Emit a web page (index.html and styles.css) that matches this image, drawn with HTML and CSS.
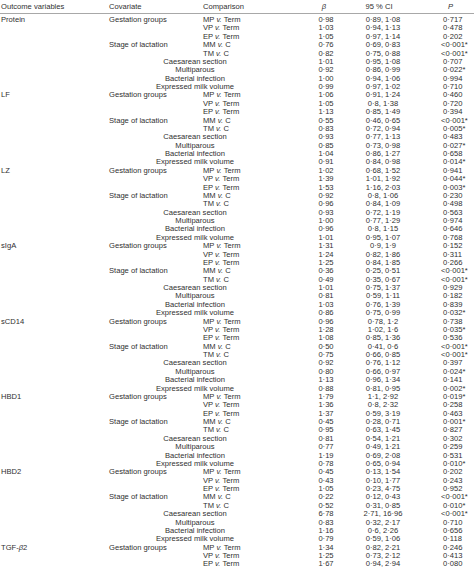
FILE: index.html
```html
<!DOCTYPE html>
<html>
<head>
<meta charset="utf-8">
<link rel="stylesheet" href="styles.css">
</head>
<body>
<table class="tbl">
<colgroup>
<col class="c-out"><col class="c-cov"><col class="c-cmp"><col class="c-b"><col class="c-ci"><col class="c-p">
</colgroup>
<thead>
<tr><th class="out">Outcome variables</th><th class="cov">Covariate</th><th class="cmp">Comparison</th><th class="ctr hb"><i>β</i></th><th class="ctr hci">95 % CI</th><th class="hp"><i>P</i></th></tr>
</thead>
<tbody>
<tr class="first"><td class="out">Protein</td><td class="cov">Gestation groups</td><td class="cmp">MP <i>v.</i> Term</td><td class="ctr">0·98</td><td class="ctr">0·89, 1·08</td><td class="p">0·717</td></tr>
<tr><td></td><td></td><td class="cmp">VP <i>v.</i> Term</td><td class="ctr">1·03</td><td class="ctr">0·94, 1·13</td><td class="p">0·478</td></tr>
<tr><td></td><td></td><td class="cmp">EP <i>v.</i> Term</td><td class="ctr">1·05</td><td class="ctr">0·97, 1·14</td><td class="p">0·202</td></tr>
<tr><td></td><td class="cov">Stage of lactation</td><td class="cmp">MM <i>v.</i> C</td><td class="ctr">0·76</td><td class="ctr">0·69, 0·83</td><td class="p lt">&lt;0·001*</td></tr>
<tr><td></td><td></td><td class="cmp">TM <i>v.</i> C</td><td class="ctr">0·82</td><td class="ctr">0·75, 0·88</td><td class="p lt">&lt;0·001*</td></tr>
<tr><td></td><td class="span" colspan="2">Caesarean section</td><td class="ctr">1·01</td><td class="ctr">0·95, 1·08</td><td class="p">0·707</td></tr>
<tr><td></td><td class="span" colspan="2">Multiparous</td><td class="ctr">0·92</td><td class="ctr">0·86, 0·99</td><td class="p">0·022*</td></tr>
<tr><td></td><td class="span" colspan="2">Bacterial infection</td><td class="ctr">1·00</td><td class="ctr">0·94, 1·06</td><td class="p">0·994</td></tr>
<tr><td></td><td class="span" colspan="2">Expressed milk volume</td><td class="ctr">0·99</td><td class="ctr">0·97, 1·02</td><td class="p">0·710</td></tr>

<tr><td class="out">LF</td><td class="cov">Gestation groups</td><td class="cmp">MP <i>v.</i> Term</td><td class="ctr">1·06</td><td class="ctr">0·91, 1·24</td><td class="p">0·460</td></tr>
<tr><td></td><td></td><td class="cmp">VP <i>v.</i> Term</td><td class="ctr">1·05</td><td class="ctr">0·8, 1·38</td><td class="p">0·720</td></tr>
<tr><td></td><td></td><td class="cmp">EP <i>v.</i> Term</td><td class="ctr">1·13</td><td class="ctr">0·85, 1·49</td><td class="p">0·394</td></tr>
<tr><td></td><td class="cov">Stage of lactation</td><td class="cmp">MM <i>v.</i> C</td><td class="ctr">0·55</td><td class="ctr">0·46, 0·65</td><td class="p lt">&lt;0·001*</td></tr>
<tr><td></td><td></td><td class="cmp">TM <i>v.</i> C</td><td class="ctr">0·83</td><td class="ctr">0·72, 0·94</td><td class="p">0·005*</td></tr>
<tr><td></td><td class="span" colspan="2">Caesarean section</td><td class="ctr">0·93</td><td class="ctr">0·77, 1·13</td><td class="p">0·483</td></tr>
<tr><td></td><td class="span" colspan="2">Multiparous</td><td class="ctr">0·85</td><td class="ctr">0·73, 0·98</td><td class="p">0·027*</td></tr>
<tr><td></td><td class="span" colspan="2">Bacterial infection</td><td class="ctr">1·04</td><td class="ctr">0·86, 1·27</td><td class="p">0·658</td></tr>
<tr><td></td><td class="span" colspan="2">Expressed milk volume</td><td class="ctr">0·91</td><td class="ctr">0·84, 0·98</td><td class="p">0·014*</td></tr>

<tr><td class="out">LZ</td><td class="cov">Gestation groups</td><td class="cmp">MP <i>v.</i> Term</td><td class="ctr">1·02</td><td class="ctr">0·68, 1·52</td><td class="p">0·941</td></tr>
<tr><td></td><td></td><td class="cmp">VP <i>v.</i> Term</td><td class="ctr">1·39</td><td class="ctr">1·01, 1·92</td><td class="p">0·044*</td></tr>
<tr><td></td><td></td><td class="cmp">EP <i>v.</i> Term</td><td class="ctr">1·53</td><td class="ctr">1·16, 2·03</td><td class="p">0·003*</td></tr>
<tr><td></td><td class="cov">Stage of lactation</td><td class="cmp">MM <i>v.</i> C</td><td class="ctr">0·92</td><td class="ctr">0·8, 1·06</td><td class="p">0·230</td></tr>
<tr><td></td><td></td><td class="cmp">TM <i>v.</i> C</td><td class="ctr">0·96</td><td class="ctr">0·84, 1·09</td><td class="p">0·498</td></tr>
<tr><td></td><td class="span" colspan="2">Caesarean section</td><td class="ctr">0·93</td><td class="ctr">0·72, 1·19</td><td class="p">0·563</td></tr>
<tr><td></td><td class="span" colspan="2">Multiparous</td><td class="ctr">1·00</td><td class="ctr">0·77, 1·29</td><td class="p">0·974</td></tr>
<tr><td></td><td class="span" colspan="2">Bacterial infection</td><td class="ctr">0·96</td><td class="ctr">0·8, 1·15</td><td class="p">0·646</td></tr>
<tr><td></td><td class="span" colspan="2">Expressed milk volume</td><td class="ctr">1·01</td><td class="ctr">0·95, 1·07</td><td class="p">0·768</td></tr>

<tr><td class="out">sIgA</td><td class="cov">Gestation groups</td><td class="cmp">MP <i>v.</i> Term</td><td class="ctr">1·31</td><td class="ctr">0·9, 1·9</td><td class="p">0·152</td></tr>
<tr><td></td><td></td><td class="cmp">VP <i>v.</i> Term</td><td class="ctr">1·24</td><td class="ctr">0·82, 1·86</td><td class="p">0·311</td></tr>
<tr><td></td><td></td><td class="cmp">EP <i>v.</i> Term</td><td class="ctr">1·25</td><td class="ctr">0·84, 1·85</td><td class="p">0·266</td></tr>
<tr><td></td><td class="cov">Stage of lactation</td><td class="cmp">MM <i>v.</i> C</td><td class="ctr">0·36</td><td class="ctr">0·25, 0·51</td><td class="p lt">&lt;0·001*</td></tr>
<tr><td></td><td></td><td class="cmp">TM <i>v.</i> C</td><td class="ctr">0·49</td><td class="ctr">0·35, 0·67</td><td class="p lt">&lt;0·001*</td></tr>
<tr><td></td><td class="span" colspan="2">Caesarean section</td><td class="ctr">1·01</td><td class="ctr">0·75, 1·37</td><td class="p">0·929</td></tr>
<tr><td></td><td class="span" colspan="2">Multiparous</td><td class="ctr">0·81</td><td class="ctr">0·59, 1·11</td><td class="p">0·182</td></tr>
<tr><td></td><td class="span" colspan="2">Bacterial infection</td><td class="ctr">1·03</td><td class="ctr">0·76, 1·39</td><td class="p">0·839</td></tr>
<tr><td></td><td class="span" colspan="2">Expressed milk volume</td><td class="ctr">0·86</td><td class="ctr">0·75, 0·99</td><td class="p">0·032*</td></tr>

<tr><td class="out">sCD14</td><td class="cov">Gestation groups</td><td class="cmp">MP <i>v.</i> Term</td><td class="ctr">0·96</td><td class="ctr">0·78, 1·2</td><td class="p">0·738</td></tr>
<tr><td></td><td></td><td class="cmp">VP <i>v.</i> Term</td><td class="ctr">1·28</td><td class="ctr">1·02, 1·6</td><td class="p">0·035*</td></tr>
<tr><td></td><td></td><td class="cmp">EP <i>v.</i> Term</td><td class="ctr">1·08</td><td class="ctr">0·85, 1·36</td><td class="p">0·536</td></tr>
<tr><td></td><td class="cov">Stage of lactation</td><td class="cmp">MM <i>v.</i> C</td><td class="ctr">0·50</td><td class="ctr">0·41, 0·6</td><td class="p lt">&lt;0·001*</td></tr>
<tr><td></td><td></td><td class="cmp">TM <i>v.</i> C</td><td class="ctr">0·75</td><td class="ctr">0·66, 0·85</td><td class="p lt">&lt;0·001*</td></tr>
<tr><td></td><td class="span" colspan="2">Caesarean section</td><td class="ctr">0·92</td><td class="ctr">0·76, 1·12</td><td class="p">0·397</td></tr>
<tr><td></td><td class="span" colspan="2">Multiparous</td><td class="ctr">0·80</td><td class="ctr">0·66, 0·97</td><td class="p">0·024*</td></tr>
<tr><td></td><td class="span" colspan="2">Bacterial infection</td><td class="ctr">1·13</td><td class="ctr">0·96, 1·34</td><td class="p">0·141</td></tr>
<tr><td></td><td class="span" colspan="2">Expressed milk volume</td><td class="ctr">0·88</td><td class="ctr">0·81, 0·95</td><td class="p">0·002*</td></tr>

<tr><td class="out">HBD1</td><td class="cov">Gestation groups</td><td class="cmp">MP <i>v.</i> Term</td><td class="ctr">1·79</td><td class="ctr">1·1, 2·92</td><td class="p">0·019*</td></tr>
<tr><td></td><td></td><td class="cmp">VP <i>v.</i> Term</td><td class="ctr">1·36</td><td class="ctr">0·8, 2·32</td><td class="p">0·258</td></tr>
<tr><td></td><td></td><td class="cmp">EP <i>v.</i> Term</td><td class="ctr">1·37</td><td class="ctr">0·59, 3·19</td><td class="p">0·463</td></tr>
<tr><td></td><td class="cov">Stage of lactation</td><td class="cmp">MM <i>v.</i> C</td><td class="ctr">0·45</td><td class="ctr">0·28, 0·71</td><td class="p">0·001*</td></tr>
<tr><td></td><td></td><td class="cmp">TM <i>v.</i> C</td><td class="ctr">0·95</td><td class="ctr">0·63, 1·45</td><td class="p">0·827</td></tr>
<tr><td></td><td class="span" colspan="2">Caesarean section</td><td class="ctr">0·81</td><td class="ctr">0·54, 1·21</td><td class="p">0·302</td></tr>
<tr><td></td><td class="span" colspan="2">Multiparous</td><td class="ctr">0·77</td><td class="ctr">0·49, 1·21</td><td class="p">0·259</td></tr>
<tr><td></td><td class="span" colspan="2">Bacterial infection</td><td class="ctr">1·19</td><td class="ctr">0·69, 2·08</td><td class="p">0·531</td></tr>
<tr><td></td><td class="span" colspan="2">Expressed milk volume</td><td class="ctr">0·78</td><td class="ctr">0·65, 0·94</td><td class="p">0·010*</td></tr>

<tr><td class="out">HBD2</td><td class="cov">Gestation groups</td><td class="cmp">MP <i>v.</i> Term</td><td class="ctr">0·45</td><td class="ctr">0·13, 1·54</td><td class="p">0·202</td></tr>
<tr><td></td><td></td><td class="cmp">VP <i>v.</i> Term</td><td class="ctr">0·43</td><td class="ctr">0·10, 1·77</td><td class="p">0·243</td></tr>
<tr><td></td><td></td><td class="cmp">EP <i>v.</i> Term</td><td class="ctr">1·05</td><td class="ctr">0·23, 4·75</td><td class="p">0·952</td></tr>
<tr><td></td><td class="cov">Stage of lactation</td><td class="cmp">MM <i>v.</i> C</td><td class="ctr">0·22</td><td class="ctr">0·12, 0·43</td><td class="p lt">&lt;0·001*</td></tr>
<tr><td></td><td></td><td class="cmp">TM <i>v.</i> C</td><td class="ctr">0·52</td><td class="ctr">0·31, 0·85</td><td class="p">0·010*</td></tr>
<tr><td></td><td class="span" colspan="2">Caesarean section</td><td class="ctr">6·78</td><td class="ctr">2·71, 16·96</td><td class="p lt">&lt;0·001*</td></tr>
<tr><td></td><td class="span" colspan="2">Multiparous</td><td class="ctr">0·83</td><td class="ctr">0·32, 2·17</td><td class="p">0·710</td></tr>
<tr><td></td><td class="span" colspan="2">Bacterial infection</td><td class="ctr">1·16</td><td class="ctr">0·6, 2·26</td><td class="p">0·656</td></tr>
<tr><td></td><td class="span" colspan="2">Expressed milk volume</td><td class="ctr">0·79</td><td class="ctr">0·59, 1·06</td><td class="p">0·118</td></tr>

<tr><td class="out">TGF-<i>β</i>2</td><td class="cov">Gestation groups</td><td class="cmp">MP <i>v.</i> Term</td><td class="ctr">1·34</td><td class="ctr">0·82, 2·21</td><td class="p">0·246</td></tr>
<tr><td></td><td></td><td class="cmp">VP <i>v.</i> Term</td><td class="ctr">1·25</td><td class="ctr">0·73, 2·12</td><td class="p">0·413</td></tr>
<tr><td></td><td></td><td class="cmp">EP <i>v.</i> Term</td><td class="ctr">1·67</td><td class="ctr">0·94, 2·94</td><td class="p">0·080</td></tr>
</tbody>
</table>
</body>
</html>
```

FILE: styles.css
```css
html, body {
  margin: 0;
  padding: 0;
  background: #ffffff;
}

.tbl {
  width: 474px;
  table-layout: fixed;
  border-collapse: collapse;
  font-family: "Liberation Sans", Arial, sans-serif;
  font-size: 7.6px;
  color: #303030;
}

.c-out { width: 108px; }
.c-cov { width: 92px; }
.c-cmp { width: 96px; }
.c-b { width: 60px; }
.c-ci { width: 54px; }
.c-p { width: 64px; }

.tbl th,
.tbl td {
  padding: 0;
  white-space: nowrap;
  vertical-align: middle;
  text-align: left;
}

.tbl th {
  font-weight: normal;
  height: 13px;
  line-height: 12px;
  border-bottom: 1px solid #a8a8a8;
}

.tbl td {
  height: 8.37px;
  line-height: 8.37px;
}

.tbl .first td {
  padding-top: 2px;
}

.tbl .out { padding-left: 1px; }
.tbl .cov { padding-left: 1px; }
.tbl .cmp { padding-left: 3px; }
.tbl .ctr { text-align: center; }
.tbl .hb { padding-right: 4px; }
.tbl .hci { padding-right: 8px; }
.tbl .p { padding-left: 33px; }
.tbl .hp { padding-left: 38px; }
.tbl .lt { text-indent: -2px; }
.tbl .span { text-align: center; padding-right: 14px; }
```
